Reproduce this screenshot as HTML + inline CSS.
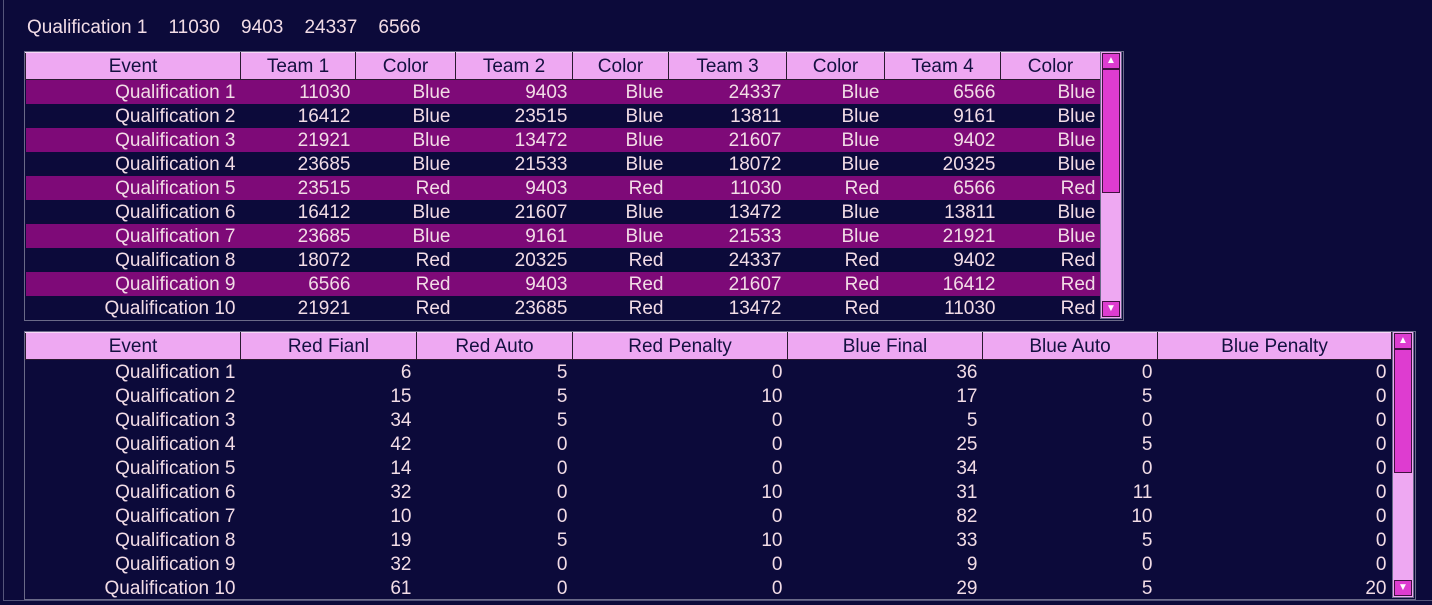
<!DOCTYPE html>
<html><head><style>
body{margin:0;width:1432px;height:605px;background:#0c0a3a;font-family:"Liberation Sans",sans-serif;overflow:hidden;position:relative;color:#f2dce6}
.frame{position:absolute;left:3px;top:-2px;width:1440px;height:602px;border:1px solid #55557a;border-top:none}
.top{position:absolute;left:27px;top:17px;font-size:19px;white-space:pre}
table{position:absolute;border-collapse:collapse;table-layout:fixed;font-size:19px}
th{background:#eea8f2;color:#141040;font-weight:normal;height:25px;padding:1px 0 0 0;border:1px solid #2a1a30;border-top:1px solid #f8d8f8;text-align:center;line-height:22px}
td{height:22px;padding:2px 5px 0 0;text-align:right;white-space:nowrap;line-height:22px;vertical-align:top;overflow:hidden}
.t1 tr:nth-child(odd) td{background:#7e0a78}
.t1 tr:nth-child(even) td{background:#0c0a3a}
.sb{position:absolute;background:#eea8f2;border:1px solid #6a6a88}
.thumb{position:absolute;left:1px;right:1px;background:#de3cd0;border:1px solid #401040}
.btn{position:absolute;left:1px;right:1px;height:14px;background:#de3cd0;border:1px solid #401040;color:#fff;font-size:10px;text-align:center;line-height:14px}
.wrap{position:absolute;border:1px solid #6a6a88}
</style></head><body>
<div class="frame"></div>
<div class="top">Qualification 1    11030    9403    24337    6566</div>

<div class="wrap" style="left:24px;top:51px;width:1098px;height:268px"></div>
<table class="t1" style="left:25px;top:52px;width:1075px">
<colgroup><col style="width:215px"><col style="width:115px"><col style="width:100px"><col style="width:117px"><col style="width:96px"><col style="width:118px"><col style="width:98px"><col style="width:116px"><col style="width:100px"></colgroup>
<tr><th>Event</th><th>Team 1</th><th>Color</th><th>Team 2</th><th>Color</th><th>Team 3</th><th>Color</th><th>Team 4</th><th>Color</th></tr>
<tbody>
<tr><td>Qualification 1</td><td>11030</td><td>Blue</td><td>9403</td><td>Blue</td><td>24337</td><td>Blue</td><td>6566</td><td>Blue</td></tr>
<tr><td>Qualification 2</td><td>16412</td><td>Blue</td><td>23515</td><td>Blue</td><td>13811</td><td>Blue</td><td>9161</td><td>Blue</td></tr>
<tr><td>Qualification 3</td><td>21921</td><td>Blue</td><td>13472</td><td>Blue</td><td>21607</td><td>Blue</td><td>9402</td><td>Blue</td></tr>
<tr><td>Qualification 4</td><td>23685</td><td>Blue</td><td>21533</td><td>Blue</td><td>18072</td><td>Blue</td><td>20325</td><td>Blue</td></tr>
<tr><td>Qualification 5</td><td>23515</td><td>Red</td><td>9403</td><td>Red</td><td>11030</td><td>Red</td><td>6566</td><td>Red</td></tr>
<tr><td>Qualification 6</td><td>16412</td><td>Blue</td><td>21607</td><td>Blue</td><td>13472</td><td>Blue</td><td>13811</td><td>Blue</td></tr>
<tr><td>Qualification 7</td><td>23685</td><td>Blue</td><td>9161</td><td>Blue</td><td>21533</td><td>Blue</td><td>21921</td><td>Blue</td></tr>
<tr><td>Qualification 8</td><td>18072</td><td>Red</td><td>20325</td><td>Red</td><td>24337</td><td>Red</td><td>9402</td><td>Red</td></tr>
<tr><td>Qualification 9</td><td>6566</td><td>Red</td><td>9403</td><td>Red</td><td>21607</td><td>Red</td><td>16412</td><td>Red</td></tr>
<tr><td>Qualification 10</td><td>21921</td><td>Red</td><td>23685</td><td>Red</td><td>13472</td><td>Red</td><td>11030</td><td>Red</td></tr>
</tbody></table>
<div class="sb" style="left:1100px;top:51px;width:20px;height:266px">
<div class="btn" style="top:1px">▲</div>
<div class="thumb" style="top:17px;height:122px"></div>
<div class="btn" style="bottom:1px">▼</div>
</div>

<div class="wrap" style="left:24px;top:331px;width:1390px;height:267px"></div>
<table class="t2" style="left:25px;top:332px;width:1366px">
<colgroup><col style="width:215px"><col style="width:176px"><col style="width:156px"><col style="width:215px"><col style="width:195px"><col style="width:175px"><col style="width:234px"></colgroup>
<tr><th>Event</th><th>Red Fianl</th><th>Red Auto</th><th>Red Penalty</th><th>Blue Final</th><th>Blue Auto</th><th>Blue Penalty</th></tr>
<tr><td>Qualification 1</td><td>6</td><td>5</td><td>0</td><td>36</td><td>0</td><td>0</td></tr>
<tr><td>Qualification 2</td><td>15</td><td>5</td><td>10</td><td>17</td><td>5</td><td>0</td></tr>
<tr><td>Qualification 3</td><td>34</td><td>5</td><td>0</td><td>5</td><td>0</td><td>0</td></tr>
<tr><td>Qualification 4</td><td>42</td><td>0</td><td>0</td><td>25</td><td>5</td><td>0</td></tr>
<tr><td>Qualification 5</td><td>14</td><td>0</td><td>0</td><td>34</td><td>0</td><td>0</td></tr>
<tr><td>Qualification 6</td><td>32</td><td>0</td><td>10</td><td>31</td><td>11</td><td>0</td></tr>
<tr><td>Qualification 7</td><td>10</td><td>0</td><td>0</td><td>82</td><td>10</td><td>0</td></tr>
<tr><td>Qualification 8</td><td>19</td><td>5</td><td>10</td><td>33</td><td>5</td><td>0</td></tr>
<tr><td>Qualification 9</td><td>32</td><td>0</td><td>0</td><td>9</td><td>0</td><td>0</td></tr>
<tr><td>Qualification 10</td><td>61</td><td>0</td><td>0</td><td>29</td><td>5</td><td>20</td></tr>
</table>
<div class="sb" style="left:1392px;top:331px;width:20px;height:265px">
<div class="btn" style="top:1px">▲</div>
<div class="thumb" style="top:17px;height:122px"></div>
<div class="btn" style="bottom:1px">▼</div>
</div>
</body></html>
